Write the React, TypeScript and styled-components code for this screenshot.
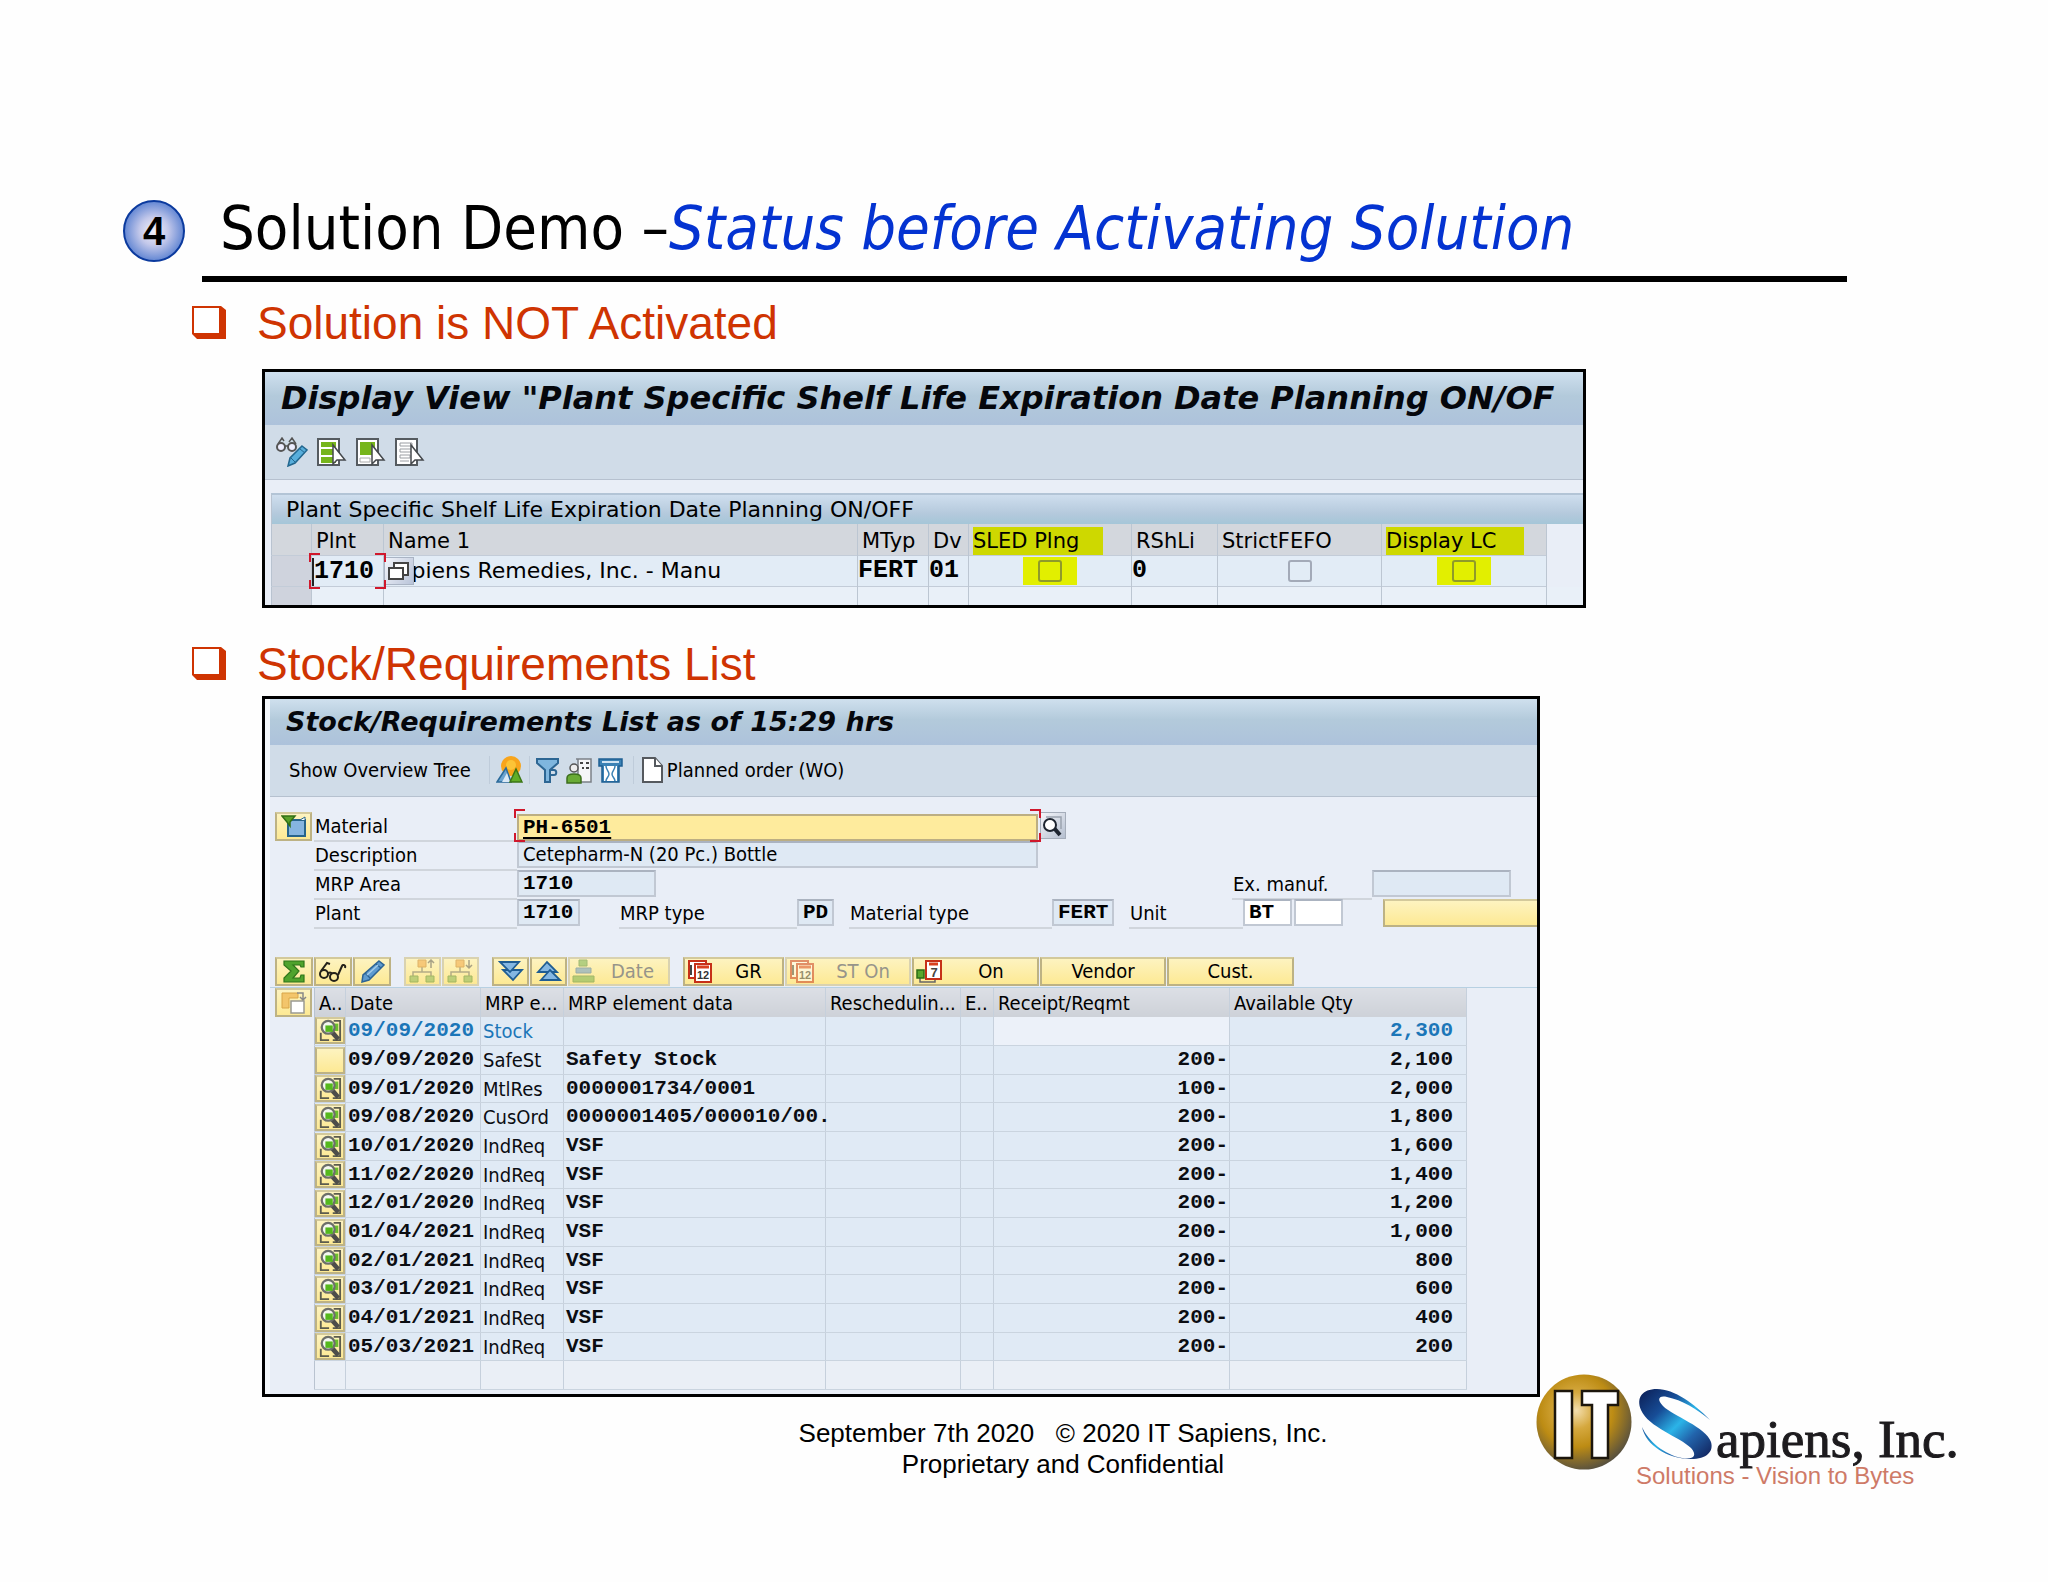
import React from 'react';
import styled, { createGlobalStyle, css } from 'styled-components';

const SANS = '"Liberation Sans", Arial, sans-serif';
const UI = '"DejaVu Sans Condensed", "DejaVu Sans", Tahoma, sans-serif';
const WIDE = '"DejaVu Sans", Verdana, sans-serif';
const MONO = '"Liberation Mono", "Courier New", monospace';

const GlobalStyle = createGlobalStyle`
  *, *::before, *::after { box-sizing: border-box; }
  body { margin: 0; background: #fefefe; color: #000; font-family: ${SANS}; }
  h1, h2, h3, p { margin: 0; font-weight: normal; }
  button, input { font: inherit; color: inherit; margin: 0; padding: 0; border-radius: 0; }
  svg { display: block; flex: none; }
`;

/* ---------- slide ---------- */

const Slide = styled.main`
  padding: 184px 201px 96px 123px;
`;

const SlideHeader = styled.header`
  display: grid;
  grid-template-columns: 62px 1fr;
  column-gap: 17px;
`;

const Badge = styled.div`
  display: grid;
  place-items: center;
  width: 62px;
  height: 62px;
  margin-top: 16px;
  border: 2px solid #0b3a9e;
  border-radius: 50%;
  background: radial-gradient(circle, #f3f2fb 0%, #c3c8ea 35%, #6f8fd6 68%, #2257bd 100%);
  font: bold 40px/56px ${SANS};
`;

const Title = styled.h1`
  padding: 0 0 4px 18px;
  border-bottom: 6px solid #000;
  font: 61px/88px ${UI};
  white-space: nowrap;

  em { color: #0433d1; }
`;

const Section = styled.section`
  padding-left: 139px;
`;

const SectionTitle = styled.h2<{ $low?: boolean }>`
  display: flex;
  align-items: center;
  gap: 30px;
  height: ${p => (p.$low ? 88 : 87)}px;
  margin-left: -70px;
  padding: ${p => (p.$low ? '24px 0 0' : '0 0 6px')};
  color: #cf3402;
  font-size: 46px;
  line-height: 54px;
`;

/* ---------- windows ---------- */

const Window = styled.div<{ $max: number }>`
  max-width: ${p => p.$max}px;
  border: 3px solid #000;
  background: #e9eef7;
  overflow: hidden;
`;

const WindowTitle = styled.h3<{ $size: number; $height: number }>`
  height: ${p => p.$height}px;
  padding-left: 16px;
  background: linear-gradient(#cfe0ee, #b3cadb 45%, #adc2db);
  color: #05070c;
  font: italic bold ${p => p.$size}px/${p => p.$height}px ${WIDE};
  white-space: nowrap;
`;

const Inset = styled.div`
  border-left: 5px solid #f4f7fb;
`;

const Toolbar = styled.div<{ $height: number; $gap: number }>`
  display: flex;
  align-items: center;
  gap: ${p => p.$gap}px;
  height: ${p => p.$height}px;
  padding-left: 11px;
  border-bottom: 1px solid #b6c1cf;
  background: #d0dce8;
  font: 20px/26px ${UI};
`;

const ToolButton = styled.button<{ $space?: number }>`
  display: flex;
  align-items: center;
  gap: 4px;
  margin-left: ${p => p.$space || 0}px;
  border: 0;
  background: none;
  white-space: nowrap;
`;

const Divider = styled.span<{ $space?: number }>`
  width: 1px;
  height: 28px;
  margin-left: ${p => p.$space || 0}px;
  background: #bfccda;
`;

/* ---------- red focus brackets ---------- */

const RED = '#d0182c';
const corner = (x: string, y: string) =>
  `linear-gradient(${RED}, ${RED}) ${x} ${y} / 11px 2px no-repeat, linear-gradient(${RED}, ${RED}) ${x} ${y} / 2px 9px no-repeat`;

const focusBrackets = css`
  position: relative;
  z-index: 1;

  &::after {
    content: '';
    position: absolute;
    inset: -3px;
    pointer-events: none;
    background: ${corner('left', 'top')}, ${corner('right', 'top')}, ${corner('left', 'bottom')},
      ${corner('right', 'bottom')};
  }
`;

/* ---------- plant table ---------- */

const PlantArea = styled.div`
  padding: 13px 0 0 6px;
`;

const PlantTable = styled.table`
  width: 100%;
  table-layout: fixed;
  border-collapse: collapse;
  border-left: 1px solid #b9c3d0;
  font: 21px/30px ${WIDE};
  white-space: nowrap;

  caption {
    height: 31px;
    padding-left: 14px;
    border-top: 2px solid #b3c4d6;
    border-left: 1px solid #b9c3d0;
    background: linear-gradient(#cfdeee, #b4c9dc 65%, #a5c6d8);
    font-size: 22px;
    line-height: 29px;
    text-align: left;
  }

  th, td {
    padding: 0 4px;
    border-right: 1px solid #bcc6d2;
    font-weight: normal;
    text-align: left;
  }

  th { height: 31px; padding-top: 3px; background: #d3d7dd; line-height: 28px; }
  td { height: 31px; border-top: 1px solid #c3ccd8; background: #e2ecf6; }
  td:first-child { background: #cfd3dd; }
  tr > :last-child { border: 0; background: #e9eef7; }
  tr:last-child td { height: 18px; background: #e9f0f8; }
  tr:last-child td:first-child { background: #cfd3dd; }
`;

const Code = styled.span`
  display: block;
  margin-left: -4px;
  font: bold 25px/28px ${MONO};
`;

const PlantInput = styled.span`
  ${focusBrackets}
  display: block;
  width: 71px;
  height: 30px;
  margin-left: -4px;

  input {
    width: 71px;
    height: 28px;
    border: 0;
    border-left: 2px solid #222;
    background: transparent;
    font: bold 25px/28px ${MONO};
  }
`;

const NameCell = styled.div`
  position: relative;
  margin-left: -4px;
  font-size: 22px;
`;

const MatchButton = styled.button`
  position: absolute;
  left: 0;
  top: 1px;
  width: 30px;
  height: 28px;
  padding-left: 2px;
  border: 1px solid #aab4c4;
  background: linear-gradient(120deg, #f2f4fa, #b9c4d9);
`;

const MarkedLabel = styled.span<{ $width: number }>`
  display: block;
  width: ${p => p.$width}px;
  background: #ced800;
`;

const CheckCell = styled.span<{ $marked?: boolean }>`
  display: grid;
  place-items: center;
  width: 54px;
  height: 28px;
  margin: 0 auto;
  background: ${p => (p.$marked ? '#e2ef00' : 'transparent')};
`;

const Checkbox = styled.input<{ $marked?: boolean }>`
  appearance: none;
  width: 24px;
  height: 22px;
  border: 2px solid ${p => (p.$marked ? '#8f9a2a' : '#a3aab8')};
  border-radius: 3px;
`;

/* ---------- material form ---------- */

const Form = styled.form`
  display: grid;
  gap: 2px;
  padding: 15px 0 31px 5px;
  font: 20px/28px ${UI};
`;

const FormRow = styled.div`
  display: grid;
  grid-template-columns: 39px minmax(0, 1fr);
  height: 27px;
`;

const FieldLine = styled.div`
  display: flex;
`;

const Label = styled.label<{ $width: number; $space?: number; $push?: boolean }>`
  flex: none;
  width: ${p => p.$width}px;
  margin-left: ${p => (p.$push ? 'auto' : `${p.$space || 0}px`)};
  padding-left: 1px;
  border-bottom: 2px solid #d0d5dc;
`;

const Field = styled.input<{ $width: number; $code?: boolean; $open?: boolean; $space?: number }>`
  flex: none;
  width: ${p => p.$width}px;
  height: 27px;
  margin-left: ${p => p.$space || 0}px;
  padding: 0 0 0 4px;
  border: 2px solid #c1c8d3;
  border-top-color: #abb3c0;
  background: ${p => (p.$open ? '#fff' : '#dfe9f4')};
  ${p => p.$code && css`font: bold 21px/23px ${MONO};`}
`;

const MaterialField = styled.span`
  ${focusBrackets}
  width: 521px;
  height: 27px;

  input {
    width: 521px;
    height: 27px;
    padding: 0 0 0 4px;
    border: 2px solid #bcae83;
    background: #feeb9d;
    font: bold 21px/23px ${MONO};
    text-decoration: underline;
    text-decoration-thickness: 2px;
    text-underline-offset: 4px;
  }
`;

const SearchButton = styled.button`
  width: 26px;
  height: 27px;
  margin-left: 2px;
  border: 1px solid #a5adba;
  background: linear-gradient(135deg, #f5f6fa, #b5bfd0);
`;

const yellow = css`
  border: 2px solid #bdb284;
  border-top-color: #d3c99b;
  background: linear-gradient(#fdf3c0, #fde994);
`;

const FormAction = styled.button`
  ${yellow}
  flex: 1;
  height: 28px;
  margin-left: 40px;
  border-right: 0;
`;

const RowEnd = styled.span`
  flex: none;
  width: 26px;
`;

/* ---------- list ---------- */

const ListToolbar = styled.div`
  display: flex;
  height: 31px;
  padding-left: 5px;
  border-bottom: 1px solid #b7d0e2;
  font: 20px/26px ${UI};
`;

const ButtonGroup = styled.div`
  display: flex;
  gap: 1px;
  margin-right: 13px;
`;

const YellowButton = styled.button<{ $width: number }>`
  ${yellow}
  display: flex;
  align-items: center;
  justify-content: center;
  width: ${p => p.$width}px;
  height: 29px;
  padding: 0 2px;
  white-space: nowrap;

  &:disabled { border-color: #d9d2b0; color: #96948a; }
  &:disabled svg { opacity: 0.5; }
  span { flex: 1; padding-left: 4px; text-align: center; }
`;

const ListArea = styled.div`
  display: grid;
  grid-template-columns: 39px minmax(0, 1153px);
  padding-left: 5px;
`;

const ListTable = styled.table`
  width: 100%;
  table-layout: fixed;
  border-collapse: collapse;
  border-left: 1px solid #b9c3d0;
  font: bold 21px/26px ${MONO};
  white-space: nowrap;

  th, td {
    padding: 0 0 0 2px;
    border-right: 1px solid #c6d0dc;
    text-align: left;
  }

  th {
    height: 29px;
    padding: 1px 0 0 4px;
    background: linear-gradient(#dcdfe5, #cdd1d8);
    font: 20px/26px ${UI};
  }

  td { height: 29px; border-bottom: 1px solid #cad4df; background: #e0eaf5; }
  tr:nth-child(3n) td { height: 28px; }
  td:first-child { padding: 0; }
`;

const TypeCell = styled.td`
  && { font: 20px/26px ${UI}; }
`;

const NumCell = styled.td<{ $pad: number; $light?: boolean }>`
  && {
    padding-right: ${p => p.$pad}px;
    text-align: right;
    ${p => p.$light && css`background: #ecf1f9;`}
  }
`;

const ListRow = styled.tr<{ $stock?: boolean; $blank?: boolean }>`
  color: ${p => (p.$stock ? '#1b76b8' : '#0b0d12')};
  ${p => p.$blank && css`&& td { height: 29px; background: #eaeff6; }`}
`;

const RowButton = styled.button`
  ${yellow}
  display: grid;
  place-items: center;
  width: 100%;
  height: 27px;
`;

const ListFoot = styled.div`
  height: 4px;
`;

/* ---------- footer ---------- */

const Footer = styled.footer`
  display: grid;
  grid-template-columns: minmax(0, 1fr) auto minmax(0, 1fr);
  margin: 0 -201px 0 -45px;
`;

const Legal = styled.p`
  grid-column: 2;
  padding-top: 21px;
  font-size: 26px;
  line-height: 31px;
  text-align: center;
  white-space: pre;
`;

const Logo = styled.svg`
  margin: -23px 0 0 210px;
  overflow: visible;
`;

/* ---------- icons ---------- */

const BoxBullet = () => (
  <svg width="35" height="34" viewBox="0 0 35 34" aria-hidden="true">
    <path d="M0 0H29L34 4V33H5L0 28Z" fill="#cf3402" />
    <path d="M2 2H27V27H2Z" fill="#fff" />
  </svg>
);

const DisplayChangeIcon = () => (
  <svg width="32" height="30" viewBox="0 0 32 30" fill="none">
    <g stroke="#555" strokeWidth="2">
      <circle cx="5" cy="10" r="4" fill="#eef" />
      <circle cx="16" cy="10" r="4" fill="#eef" />
      <path d="M9 9h3M2 7l4-6 2 3M13 5l3-4 4 6" strokeWidth="1.5" />
    </g>
    <path d="M26 9l5 4-12 13-7 3 2-8Z" fill="#58aedb" stroke="#22678f" strokeWidth="1.5" />
    <path d="M24 12l5 4M15 21l4 4" stroke="#22678f" />
  </svg>
);

const SelectIcon = ({ kind }: { kind: 'all' | 'block' | 'none' }) => (
  <svg width="31" height="30" viewBox="0 0 31 30" fill="none">
    <rect x="2" y="2" width="21" height="26" fill="#fff" stroke="#555b60" strokeWidth="2" />
    {kind === 'all' && <path d="M5 5h15v5H5zM5 12h15v6H5zM5 20h15v6H5z" fill="#76b51b" />}
    {kind === 'block' && <path d="M5 5h15v13H5z" fill="#76b51b" />}
    {kind === 'block' && <path d="M5 21h10v4H5z" stroke="#aaa" />}
    {kind === 'none' && <path d="M6 6h12v3H6zM6 12h12v3H6zM6 18h10v3H6zM6 24h9" stroke="#9a9da2" />}
    <path d="M17 8v19l4-4h8Z" fill="#fff" stroke="#44484c" strokeWidth="1.5" />
  </svg>
);

const MatchIcon = () => (
  <svg width="24" height="24" viewBox="0 0 24 24" fill="#fff" stroke="#444" strokeWidth="2">
    <path d="M7 4h14v12H7z" />
    <path d="M2 9h14v11H2z" />
  </svg>
);

const MountainIcon = () => (
  <svg width="27" height="28" viewBox="0 0 27 28">
    <circle cx="15" cy="10" r="10" fill="#f8a51c" />
    <circle cx="15" cy="9" r="5" fill="#fcc437" />
    <path d="M1 26 10 12l5 14Z" fill="#6ba3cf" stroke="#2b6a9a" strokeWidth="1.5" />
    <path d="M6 26l5-9 3 9Z" fill="#dbe9f5" />
    <path d="M14 26l6-13 6 13Z" fill="#62ad27" stroke="#3b7616" strokeWidth="1.5" />
  </svg>
);

const FunnelIcon = () => (
  <svg width="24" height="27" viewBox="0 0 24 27" fill="#7fb6de" stroke="#2d6693" strokeWidth="2">
    <path d="M1 2h21v4l-8 7v12H9V13L1 6Z" />
    <path d="M15 13h3c3 0 3 5 0 5h-3" fill="#d0dce8" />
  </svg>
);

const PersonIcon = () => (
  <svg width="26" height="27" viewBox="0 0 26 27">
    <path d="M10 2h15v23H12V2Z" fill="#f5f6f8" stroke="#7b8087" strokeWidth="1.5" />
    <path d="M14 6h3m3 0h3m-7 5h2m2 0h3" stroke="#444" strokeWidth="2" />
    <circle cx="8" cy="11" r="4" fill="#eee" stroke="#555" strokeWidth="1.5" />
    <path d="M1 26v-5c0-3 3-4 7-4s7 1 7 4v5Z" fill="#69ab35" stroke="#3c6e1d" strokeWidth="1.5" />
  </svg>
);

const PeriodIcon = () => (
  <svg width="25" height="27" viewBox="0 0 25 27">
    <path d="M1 2h23v7h-3v16H4V9H1Z" fill="#3b82b5" stroke="#1e5f92" strokeWidth="1.5" />
    <path d="M4 5h17" stroke="#cfe3f2" strokeWidth="2" />
    <path d="M6 9h13v15H6Z" fill="#fff" />
    <path d="M8 9c0 4 3 5 3 8s-3 4-3 7M17 9c0 4-3 5-3 8s3 4 3 7" fill="none" stroke="#3b82b5" strokeWidth="1.5" />
  </svg>
);

const PageIcon = () => (
  <svg width="21" height="28" viewBox="0 0 21 28" fill="#fff" stroke="#55595e" strokeWidth="2">
    <path d="M1 2h12l7 8v16H1Z" />
    <path d="M13 2v8h7" />
  </svg>
);

const VariantIcon = () => (
  <svg width="26" height="22" viewBox="0 0 26 22">
    <path d="M7 5h17v16H7Z" fill="#86b5e0" stroke="#27648b" strokeWidth="2" />
    <path d="M1 1h13l-5 6v4L6 7Z" fill="#5aa02a" stroke="#326f14" strokeWidth="1.5" />
    <path d="M19 5l5-3v3" fill="#fff" stroke="#27648b" />
  </svg>
);

const LoupeIcon = () => (
  <svg width="24" height="25" viewBox="0 0 24 25" fill="none">
    <path d="M5 4h15v12" stroke="#9aa2ae" strokeWidth="1.5" />
    <path d="M13 15l6 7" stroke="#1e2530" strokeWidth="4" />
    <circle cx="9" cy="12" r="6" fill="#fff" stroke="#1e2530" strokeWidth="2" />
  </svg>
);

const SigmaIcon = () => (
  <svg width="24" height="23" viewBox="0 0 24 23">
    <path d="M2 1h20v6h-3l-1-2h-7l6 6-6 7h7l1-3h3v7H2v-4l7-7-7-6Z" fill="#4fa32d" stroke="#2e751a" strokeWidth="1.2" />
  </svg>
);

const GlassesIcon = () => (
  <svg width="28" height="22" viewBox="0 0 28 22" fill="none" stroke="#24211a" strokeWidth="2">
    <circle cx="5" cy="14" r="4" />
    <circle cx="15" cy="17" r="4" />
    <path d="M9 14c1-2 3-2 4 0M2 11 8 3l3 1M19 15l4-9c1-2 4-1 3 2" />
  </svg>
);

const PencilIcon = () => (
  <svg width="25" height="23" viewBox="0 0 25 23">
    <path d="M19 1l5 4L9 20l-7 2 1-7Z" fill="#5e9bd0" stroke="#2c6394" strokeWidth="1.5" />
    <path d="M16 4l5 4M5 13l5 5" stroke="#2c6394" strokeWidth="1.3" />
    <path d="M7 15 18 5" stroke="#a4cbe9" strokeWidth="1.5" />
  </svg>
);

const TreeIcon = ({ down }: { down?: boolean }) => (
  <svg width="27" height="24" viewBox="0 0 27 24">
    <path d="M13 8v5M4 18v-5h18v5" fill="none" stroke="#6c6c66" strokeWidth="1.5" />
    <path d="M9 1h8v7H9Z" fill="#f1a13b" stroke="#c0761a" />
    <path d="M1 17h8v6H1Zm16 0h8v6h-8Z" fill="#7fb356" stroke="#4e8529" />
    <path d={down ? 'M22 1v8m-3-3 3 3 3-3' : 'M22 9V1m-3 3 3-3 3 3'} fill="none" stroke="#555" strokeWidth="1.5" />
  </svg>
);

const ChevronsIcon = ({ up }: { up?: boolean }) => (
  <svg width="26" height="22" viewBox="0 0 26 22">
    <g transform={up ? 'rotate(180 13 11)' : undefined} fill="#84b7e2" stroke="#1f5d93" strokeWidth="1.8">
      <path d="M5 10h19l-9 10Z" />
      <path d="M2 2h19l-9 10Z" />
    </g>
  </svg>
);

const SortIcon = () => (
  <svg width="23" height="24" viewBox="0 0 23 24">
    <path d="M7 1h8v6H7Z" fill="#6eae4a" stroke="#4b8430" />
    <path d="M4 9h15v5H4Z" fill="#5f94cb" stroke="#3c6da0" />
    <path d="M1 17h21v6H1Z" fill="#6eae4a" stroke="#4b8430" />
  </svg>
);

const CalendarIcon = () => (
  <svg width="26" height="24" viewBox="0 0 26 24">
    <path d="M2 2h17v17H2Z" fill="#fff" stroke="#c63018" strokeWidth="2" />
    <path d="M4 6v10" stroke="#444" strokeWidth="2" />
    <path d="M8 5h16v18H8Z" fill="#fff" stroke="#c63018" strokeWidth="2" />
    <path d="M10 8h12" stroke="#d8401f" strokeWidth="3" />
    <text x="16" y="20" fontSize="11" fontWeight="bold" textAnchor="middle" fontFamily="Liberation Sans, sans-serif" fill="#333">12</text>
  </svg>
);

const DayIcon = () => (
  <svg width="27" height="25" viewBox="0 0 27 25">
    <path d="M4 18v5h15v-5" fill="none" stroke="#666" strokeWidth="1.5" />
    <path d="M1 11h7v8H1Z" fill="#5aa62c" stroke="#2d6d15" strokeWidth="1.5" />
    <path d="M10 2h15v18H10Z" fill="#fff" stroke="#c63018" strokeWidth="2" />
    <path d="M13 5h9" stroke="#d8401f" strokeWidth="3" />
    <text x="18" y="18" fontSize="13" fontWeight="bold" textAnchor="middle" fontFamily="Liberation Sans, sans-serif" fill="#444">7</text>
  </svg>
);

const LayoutIcon = () => (
  <svg width="26" height="24" viewBox="0 0 26 24">
    <path d="M1 3h16v5H8v10H1Z" fill="#f3c56b" stroke="#d9a648" />
    <path d="M10 11h13v12H10Z" fill="#fff" stroke="#9a9a92" strokeWidth="1.5" />
    <path d="M16 3h6v6m-3-2 3 3 3-3" fill="none" stroke="#888" strokeWidth="1.5" />
  </svg>
);

const DetailIcon = () => (
  <svg width="26" height="23" viewBox="0 0 28 25">
    <path d="M4 15v8h9M17 23h8V2h-7" fill="none" stroke="#5c5c4e" strokeWidth="2" />
    <path d="M17 5h6v8h-6Z" fill="#6cbf2c" />
    <path d="M16 14l7 8" stroke="#4d4d4a" strokeWidth="5" />
    <circle cx="12" cy="9" r="7" fill="#f4f7f0" stroke="#6d6f6a" strokeWidth="2.5" />
    <path d="M9 7h8v7H9Z" fill="#55b81d" />
  </svg>
);

const SapiensLogo = () => (
  <Logo width="424" height="118" viewBox="0 0 424 118" role="img" aria-label="IT Sapiens, Inc.">
    <defs>
      <radialGradient id="gold" cx="0.42" cy="0.38" r="0.64">
        <stop offset="0" stopColor="#f4dfae" />
        <stop offset="0.3" stopColor="#d5a83e" />
        <stop offset="0.6" stopColor="#bd8c14" />
        <stop offset="1" stopColor="#57503f" />
      </radialGradient>
      <linearGradient id="swoosh" x1="0" y1="0" x2="1" y2="1">
        <stop offset="0" stopColor="#0b1c52" />
        <stop offset="0.3" stopColor="#174d97" />
        <stop offset="0.52" stopColor="#2bb4e8" />
        <stop offset="0.7" stopColor="#2264ac" />
        <stop offset="1" stopColor="#101c54" />
      </linearGradient>
    </defs>
    <circle cx="47" cy="48" r="47.5" fill="url(#gold)" />
    <g fill="#fff" stroke="#1c160c" strokeWidth="2.5">
      <path d="M18 17H35V84H18Z" />
      <path d="M45 17H81V31H71V84H55V31H45Z" />
    </g>
    <path
      d="M173 46C158 30 137 15 120 15C105 15 99 24 104 36C111 53 143 63 154 74C161 82 156 86 145 84C128 81 111 67 105 53C109 72 131 84 151 85C169 86 177 78 174 68C169 53 136 42 126 32C120 26 121 21 130 23C145 26 160 35 173 46Z"
      fill="url(#swoosh)"
    />
    <text x="179" y="83" fontSize="53" fontFamily="Liberation Serif, Times New Roman, serif" fill="#1d1b1e" stroke="#1d1b1e" strokeWidth="1">
      apiens, Inc.
    </text>
    <text x="99" y="110" fontSize="24" fontFamily="Liberation Sans, Arial, sans-serif" fill="#ce7a67">
      Solutions - Vision to Bytes
    </text>
  </Logo>
);

/* ---------- data ---------- */

type Entry = { date: string; type: string; data: string; receipt: string; qty: string };

const entries: Entry[] = [
  { date: '09/09/2020', type: 'Stock', data: '', receipt: '', qty: '2,300' },
  { date: '09/09/2020', type: 'SafeSt', data: 'Safety Stock', receipt: '200-', qty: '2,100' },
  { date: '09/01/2020', type: 'MtlRes', data: '0000001734/0001', receipt: '100-', qty: '2,000' },
  { date: '09/08/2020', type: 'CusOrd', data: '0000001405/000010/00.', receipt: '200-', qty: '1,800' },
  { date: '10/01/2020', type: 'IndReq', data: 'VSF', receipt: '200-', qty: '1,600' },
  { date: '11/02/2020', type: 'IndReq', data: 'VSF', receipt: '200-', qty: '1,400' },
  { date: '12/01/2020', type: 'IndReq', data: 'VSF', receipt: '200-', qty: '1,200' },
  { date: '01/04/2021', type: 'IndReq', data: 'VSF', receipt: '200-', qty: '1,000' },
  { date: '02/01/2021', type: 'IndReq', data: 'VSF', receipt: '200-', qty: '800' },
  { date: '03/01/2021', type: 'IndReq', data: 'VSF', receipt: '200-', qty: '600' },
  { date: '04/01/2021', type: 'IndReq', data: 'VSF', receipt: '200-', qty: '400' },
  { date: '05/03/2021', type: 'IndReq', data: 'VSF', receipt: '200-', qty: '200' },
];

const Col = styled.col<{ $w?: number }>`
  ${p => p.$w && css`width: ${p.$w}px;`}
`;

const plantCols = [40, 72, 474, 71, 40, 163, 86, 164, 165];
const listCols = [31, 135, 83, 262, 135, 33, 236];

/* ---------- windows ---------- */

const PlantWindow = () => (
  <Window $max={1324}>
    <WindowTitle $size={32} $height={53}>
      Display View "Plant Specific Shelf Life Expiration Date Planning ON/OF
    </WindowTitle>
    <Toolbar $height={55} $gap={8}>
      <ToolButton aria-label="Display or change"><DisplayChangeIcon /></ToolButton>
      <ToolButton aria-label="Select all"><SelectIcon kind="all" /></ToolButton>
      <ToolButton aria-label="Select block"><SelectIcon kind="block" /></ToolButton>
      <ToolButton aria-label="Deselect all"><SelectIcon kind="none" /></ToolButton>
    </Toolbar>
    <PlantArea>
      <PlantTable>
        <caption>Plant Specific Shelf Life Expiration Date Planning ON/OFF</caption>
        <colgroup>
          {plantCols.map((w, i) => <Col key={i} $w={w} />)}
          <Col />
        </colgroup>
        <thead>
          <tr>
            <th />
            <th>Plnt</th>
            <th>Name 1</th>
            <th>MTyp</th>
            <th>Dv</th>
            <th><MarkedLabel $width={130}>SLED Plng</MarkedLabel></th>
            <th>RShLi</th>
            <th>StrictFEFO</th>
            <th><MarkedLabel $width={138}>Display LC</MarkedLabel></th>
            <th />
          </tr>
        </thead>
        <tbody>
          <tr>
            <td />
            <td><PlantInput><input aria-label="Plant" defaultValue="1710" /></PlantInput></td>
            <td>
              <NameCell>
                Sapiens Remedies, Inc. - Manu
                <MatchButton aria-label="Possible entries"><MatchIcon /></MatchButton>
              </NameCell>
            </td>
            <td><Code>FERT</Code></td>
            <td><Code>01</Code></td>
            <td><CheckCell $marked><Checkbox $marked type="checkbox" aria-label="SLED Plng" /></CheckCell></td>
            <td><Code>0</Code></td>
            <td><CheckCell><Checkbox type="checkbox" aria-label="StrictFEFO" /></CheckCell></td>
            <td><CheckCell $marked><Checkbox $marked type="checkbox" aria-label="Display LC" /></CheckCell></td>
            <td />
          </tr>
          <tr>{Array.from({ length: 10 }, (_, i) => <td key={i} />)}</tr>
        </tbody>
      </PlantTable>
    </PlantArea>
  </Window>
);

const MaterialForm = () => (
  <Form>
    <FormRow>
      <YellowButton type="button" $width={37} aria-label="Header variant"><VariantIcon /></YellowButton>
      <FieldLine>
        <Label $width={203} htmlFor="material">Material</Label>
        <MaterialField><input id="material" defaultValue="PH-6501" /></MaterialField>
        <SearchButton type="button" aria-label="Search material"><LoupeIcon /></SearchButton>
      </FieldLine>
    </FormRow>
    <FormRow>
      <span />
      <FieldLine>
        <Label $width={203} htmlFor="description">Description</Label>
        <Field $width={521} id="description" readOnly value="Cetepharm-N (20 Pc.) Bottle" />
      </FieldLine>
    </FormRow>
    <FormRow>
      <span />
      <FieldLine>
        <Label $width={203} htmlFor="area">MRP Area</Label>
        <Field $width={139} $code id="area" readOnly value="1710" />
        <Label $width={140} $push htmlFor="manuf">Ex. manuf.</Label>
        <Field $width={139} id="manuf" readOnly value="" />
        <RowEnd />
      </FieldLine>
    </FormRow>
    <FormRow>
      <span />
      <FieldLine>
        <Label $width={203} htmlFor="plant">Plant</Label>
        <Field $width={63} $code id="plant" readOnly value="1710" />
        <Label $width={178} $space={39} htmlFor="mrptype">MRP type</Label>
        <Field $width={37} $code id="mrptype" readOnly value="PD" />
        <Label $width={203} $space={15} htmlFor="mattype">Material type</Label>
        <Field $width={62} $code id="mattype" readOnly value="FERT" />
        <Label $width={114} $space={15} htmlFor="unit">Unit</Label>
        <Field $width={49} $code $open id="unit" defaultValue="BT" />
        <Field $width={49} $code $open $space={2} aria-label="Second unit" defaultValue="" />
        <FormAction type="button" aria-label="More" />
      </FieldLine>
    </FormRow>
  </Form>
);

const StockWindow = () => (
  <Window $max={1278}>
    <Inset>
      <WindowTitle $size={27} $height={46}>Stock/Requirements List as of 15:29 hrs</WindowTitle>
      <Toolbar $height={52} $gap={6}>
        <ToolButton $space={8}>Show Overview Tree</ToolButton>
        <Divider $space={12} />
        <ToolButton aria-label="Overview"><MountainIcon /></ToolButton>
        <Divider />
        <ToolButton aria-label="Filter"><FunnelIcon /></ToolButton>
        <ToolButton aria-label="User settings"><PersonIcon /></ToolButton>
        <ToolButton aria-label="Period totals"><PeriodIcon /></ToolButton>
        <Divider $space={4} />
        <ToolButton $space={2}><PageIcon />Planned order (WO)</ToolButton>
      </Toolbar>
      <MaterialForm />
      <ListToolbar>
        <ButtonGroup>
          <YellowButton $width={38} aria-label="Totals"><SigmaIcon /></YellowButton>
          <YellowButton $width={38} aria-label="Display"><GlassesIcon /></YellowButton>
          <YellowButton $width={38} aria-label="Edit"><PencilIcon /></YellowButton>
        </ButtonGroup>
        <ButtonGroup>
          <YellowButton $width={37} disabled aria-label="Level up"><TreeIcon /></YellowButton>
          <YellowButton $width={37} disabled aria-label="Level down"><TreeIcon down /></YellowButton>
        </ButtonGroup>
        <ButtonGroup>
          <YellowButton $width={37} aria-label="Expand"><ChevronsIcon /></YellowButton>
          <YellowButton $width={37} aria-label="Collapse"><ChevronsIcon up /></YellowButton>
          <YellowButton $width={102} disabled><SortIcon /><span>Date</span></YellowButton>
        </ButtonGroup>
        <ButtonGroup>
          <YellowButton $width={101}><CalendarIcon /><span>GR</span></YellowButton>
          <YellowButton $width={126} disabled><CalendarIcon /><span>ST On</span></YellowButton>
          <YellowButton $width={127}><DayIcon /><span>On</span></YellowButton>
          <YellowButton $width={126}>Vendor</YellowButton>
          <YellowButton $width={127}>Cust.</YellowButton>
        </ButtonGroup>
      </ListToolbar>
      <ListArea>
        <YellowButton $width={37} aria-label="Layout"><LayoutIcon /></YellowButton>
        <ListTable>
          <colgroup>
            {listCols.map((w, i) => <Col key={i} $w={w} />)}
            <Col />
          </colgroup>
          <thead>
            <tr>
              <th>A..</th>
              <th>Date</th>
              <th>MRP e...</th>
              <th>MRP element data</th>
              <th>Reschedulin...</th>
              <th>E..</th>
              <th>Receipt/Reqmt</th>
              <th>Available Qty</th>
            </tr>
          </thead>
          <tbody>
            {entries.map((e, i) => (
              <ListRow key={i} $stock={i === 0}>
                <td><RowButton aria-label={`Details ${e.date}`}>{i !== 1 && <DetailIcon />}</RowButton></td>
                <td>{e.date}</td>
                <TypeCell>{e.type}</TypeCell>
                <td>{e.data}</td>
                <td />
                <td />
                <NumCell $pad={1} $light={i === 0}>{e.receipt}</NumCell>
                <NumCell $pad={13}>{e.qty}</NumCell>
              </ListRow>
            ))}
            <ListRow $blank>{Array.from({ length: 8 }, (_, i) => <td key={i} />)}</ListRow>
          </tbody>
        </ListTable>
      </ListArea>
      <ListFoot />
    </Inset>
  </Window>
);

export default function App() {
  return (
    <>
      <GlobalStyle />
      <Slide>
        <SlideHeader>
          <Badge>4</Badge>
          <Title>Solution Demo –<em>Status before Activating Solution</em></Title>
        </SlideHeader>
        <Section>
          <SectionTitle><BoxBullet />Solution is NOT Activated</SectionTitle>
          <PlantWindow />
        </Section>
        <Section>
          <SectionTitle $low><BoxBullet />Stock/Requirements List</SectionTitle>
          <StockWindow />
        </Section>
        <Footer>
          <Legal>{'September 7th 2020   © 2020 IT Sapiens, Inc.\nProprietary and Confidential'}</Legal>
          <SapiensLogo />
        </Footer>
      </Slide>
    </>
  );
}
